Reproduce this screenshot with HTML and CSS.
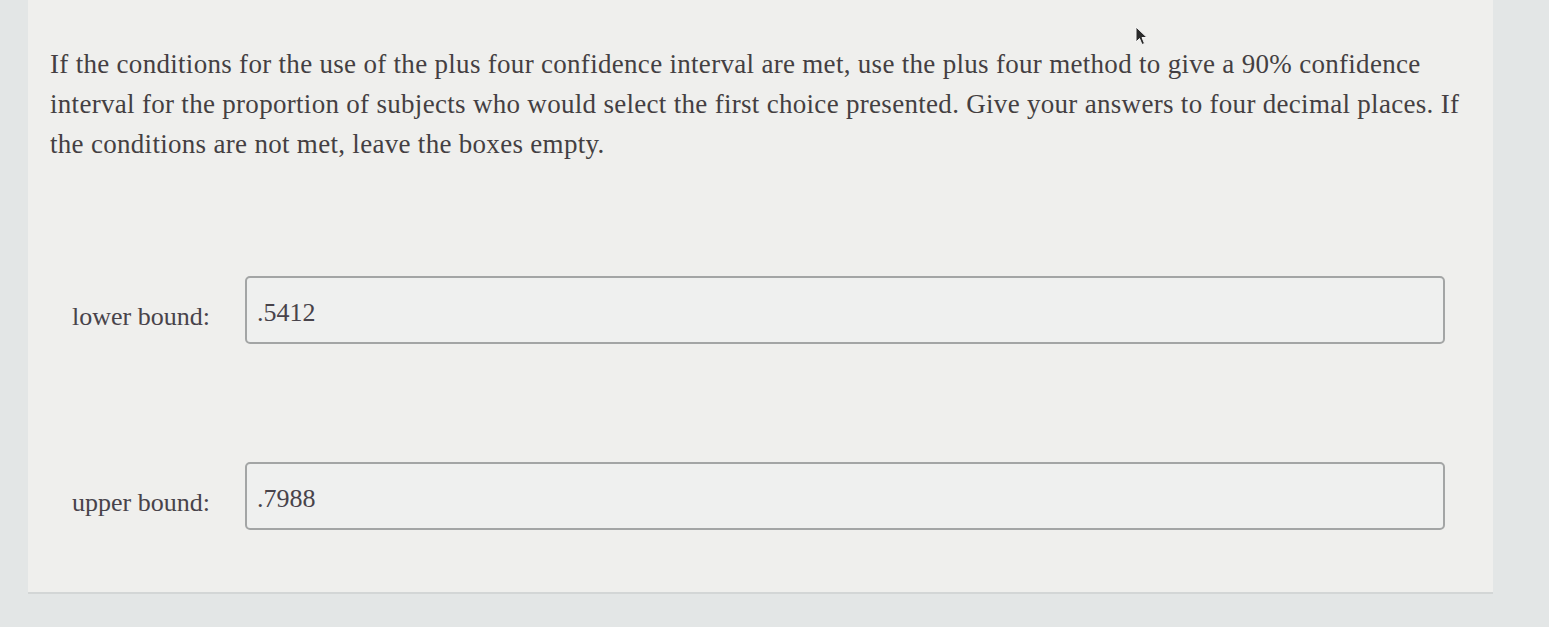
FILE: index.html
```html
<!DOCTYPE html>
<html>
<head>
<meta charset="utf-8">
<link rel="stylesheet" href="styles.css">
</head>
<body>
<div class="page">
  <div class="card">
    <p class="question">If the conditions for the use of the plus four confidence interval are met, use the plus four method to give a 90% confidence interval for the proportion of subjects who would select the first choice presented. Give your answers to four decimal places. If the conditions are not met, leave the boxes empty.</p>
    <div class="answers">
      <div class="row">
        <label class="label">lower bound:</label>
        <div class="field">.5412</div>
      </div>
      <div class="row">
        <label class="label">upper bound:</label>
        <div class="field">.7988</div>
      </div>
    </div>
  </div>
  <svg class="cursor" width="14" height="20" viewBox="0 0 14 20"><path d="M1 1 L1 16 L4.5 12.5 L7 18.5 L9.5 17.5 L7 11.5 L12 11.5 Z" fill="#2a2a2a" stroke="#f4f4f4" stroke-width="1"/></svg>
</div>
</body>
</html>
```
FILE: styles.css
```css
html, body {
  margin: 0;
  padding: 0;
  background: #e3e6e6;
  width: 1549px;
  height: 627px;
  overflow: hidden;
}
.page {
  position: relative;
  width: 1549px;
  height: 627px;
}
.card {
  margin-left: 28px;
  width: 1465px;
  box-sizing: border-box;
  height: 594px;
  background: #efefed;
  border-bottom: 2px solid #d3d6d6;
  padding: 44px 10px 0 22px;
  font-family: "Liberation Serif", "Times New Roman", serif;
  color: #443f42;
}
.question {
  margin: 0;
  font-size: 27px;
  letter-spacing: 0.3px;
  line-height: 40px;
}
.answers {
  margin-top: 112px;
  padding-left: 22px;
  margin-right: 38px;
  display: flex;
  flex-direction: column;
  gap: 118px;
}
.row {
  display: grid;
  grid-template-columns: 173px 1fr;
  align-items: start;
}
.label {
  font-size: 26px;
  line-height: 30px;
  padding-top: 26px;
  color: #48434a;
}
.field {
  height: 68px;
  box-sizing: border-box;
  border: 2px solid #a3a5a5;
  border-radius: 5px;
  background: #eff0ef;
  font-size: 26px;
  line-height: 30px;
  padding: 20px 0 0 10px;
  color: #48434a;
}
.cursor {
  position: absolute;
  left: 1135px;
  top: 26px;
}
```
